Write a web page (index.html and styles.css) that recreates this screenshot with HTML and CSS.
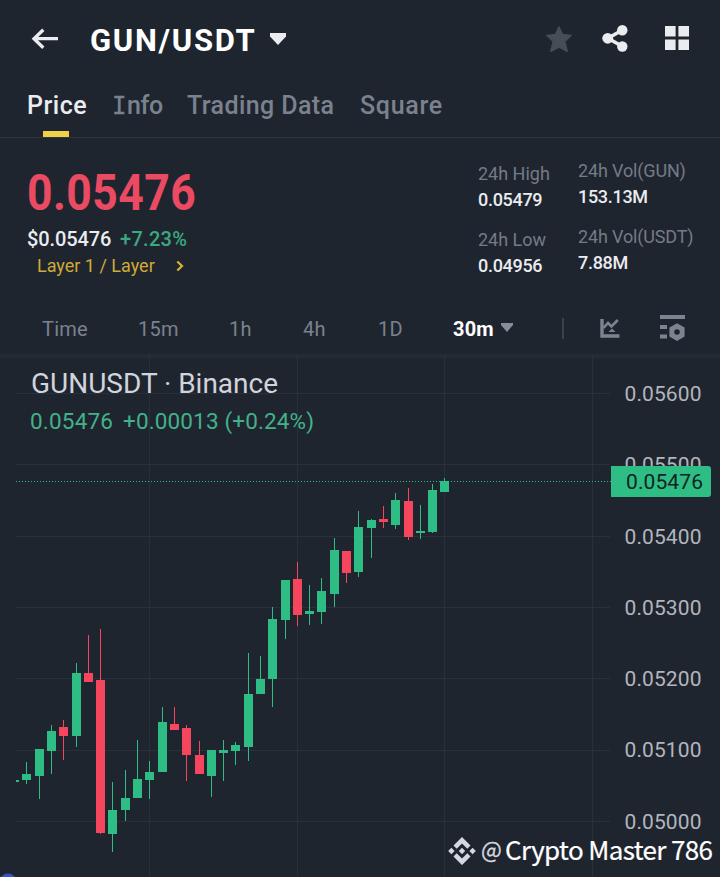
FILE: index.html
```html
<!DOCTYPE html>
<html lang="en">
<head>
<meta charset="utf-8">
<title>GUN/USDT</title>
<link rel="stylesheet" href="styles.css">
</head>
<body>
<div class="app">
  <header class="topbar">
    <svg class="back" width="28" height="22" viewBox="0 0 28 22"><path d="M27 10.700H3M12.300 1.700L3 10.700L12.300 19.700" fill="none" stroke="#eaecef" stroke-width="3.300"/></svg>
    <h1 class="pair">GUN/USDT</h1>
    <svg class="pair-caret" width="18" height="14" viewBox="0 0 18 14"><path d="M1 1H17V4.500L9 13L1 4.500Z" fill="#eaecef"/></svg>
    <svg class="star" width="28" height="28" viewBox="0 0 28 28"><path d="M14 2L17.400 9.400L26 10.400L19.700 16.500L22.200 26.300L14 22L5.800 26.300L8.300 16.500L2 10.400L10.600 9.400Z" fill="#474d57" stroke="#474d57" stroke-width="1.500" stroke-linejoin="round"/></svg>
    <svg class="share" width="28" height="28" viewBox="0 0 28 28"><path d="M21.500 6L7 14.300L21.500 22.500" fill="none" stroke="#eaecef" stroke-width="3.600"/><g fill="#eaecef"><circle cx="21.300" cy="6.200" r="5.200"/><circle cx="6.700" cy="14.300" r="5.400"/><circle cx="21.300" cy="22.500" r="5.200"/></g></svg>
    <svg class="apps" width="24" height="24" viewBox="0 0 24 24"><path d="M0 0H10.600V10.500H0ZM13.400 0H24V10.500H13.400ZM0 13.500H10.600V24H0ZM13.400 13.500H24V24H13.400Z" fill="#eaecef"/></svg>
  </header>
  <nav class="tabs">
    <span class="tab tab-price active">Price</span>
    <span class="tab tab-info"><span class="slab">I</span>nfo</span>
    <span class="tab tab-data">Trading Data</span>
    <span class="tab tab-square">Square</span>
  </nav>
  <section class="summary">
    <div class="quote">
      <div class="last">0.05476</div>
      <div class="fiat"><span class="usd">$0.05476</span><span class="change">+7.23%</span></div>
      <div class="category"><span>Layer 1 / Layer</span><svg width="8" height="12" viewBox="0 0 8 12"><path d="M1.300 1.500L6 6L1.300 10.500" fill="none" stroke="#d9b43a" stroke-width="2.200"/></svg></div>
    </div>
    <dl class="stats stats-range">
      <dt>24h High</dt><dd>0.05479</dd>
      <dt>24h Low</dt><dd>0.04956</dd>
    </dl>
    <dl class="stats stats-volume">
      <dt>24h Vol(GUN)</dt><dd>153.13M</dd>
      <dt>24h Vol(USDT)</dt><dd>7.88M</dd>
    </dl>
  </section>
  <nav class="intervals">
    <span class="iv iv-time">Time</span>
    <span class="iv iv-15m">15m</span>
    <span class="iv iv-1h">1h</span>
    <span class="iv iv-4h">4h</span>
    <span class="iv iv-1d">1D</span>
    <span class="iv iv-30m">30m</span>
    <svg class="iv-caret" width="12" height="9" viewBox="0 0 12 9"><path d="M0 0H12V2L6 9L0 2Z" fill="#848e9c"/></svg>
    <i class="divider"></i>
    <svg class="line-icon" width="20" height="21" viewBox="0 0 20 21"><path d="M2 1V18H19.500" fill="none" stroke="#7c8491" stroke-width="3.400"/><path d="M3.500 10L8 5L11.500 8.500L17.800 2" fill="none" stroke="#7c8491" stroke-width="2.600"/><path d="M12 10.500L15.500 14H8.500Z" fill="#7c8491"/></svg>
    <svg class="settings-icon" width="26" height="26" viewBox="0 0 26 26"><path d="M0 0H25V4H0ZM0 10H7V14H0ZM0 19.500H7V23.500H0Z" fill="#7c8491"/><path fill-rule="evenodd" d="M17 8.200L24.600 12.500V21.500L17 26L9.400 21.500V12.500ZM17 14.200A2.800 2.800 0 1 0 17 19.800A2.800 2.800 0 1 0 17 14.200Z" fill="#7c8491"/></svg>
  </nav>
  <main class="chart">
    <svg width="720" height="523" viewBox="0 354 720 523">
      <rect x="0" y="354" width="720" height="4" fill="#242b35"/>
      <path class="grid" d="M149.500 354V877M297.500 354V877M444.500 354V877M592.500 354V877M16 393.500H610M16 464.500H610M16 536.500H610M16 607.500H610M16 678.500H610M16 750.500H610M16 821.500H610"/>
      <path d="M16 481.500H611" stroke="#2ebd85" stroke-width="1" stroke-dasharray="1 2"/>
      <path class="wick up" d="M26.500 762V784M39.500 749V799M51.500 725V774M76.500 663V747M112.500 782V852M125.500 770V821M137.500 740V798M149.500 761V799M162.500 707V772M211.500 750V797M223.500 740V781M235.500 742V765M248.500 653V761M260.500 656V694M272.500 607V707M285.500 580V639M309.500 585V625M321.500 578V624M334.500 538V607M358.500 511V577M371.500 519V558M395.500 493V529M420.500 505V539M432.500 484V533M444.500 478V492"/>
      <path class="wick down" d="M63.500 720V760M88.500 635V682M100.500 629V834M174.500 707V730M186.500 725V781M199.500 741V774M297.500 562V626M346.500 551V583M383.500 506V528M408.500 488V540"/>
      <path fill="#2ebd85" d="M16 780h3v2h-3zM22 774h9v6h-9zM35 749h9v27h-9zM47 731h9v20h-9zM72 673h9v63h-9zM108 810h9v24h-9zM121 798h9v12h-9zM133 779h9v19h-9zM145 772h9v8h-9zM158 722h9v50h-9zM207 750h9v26h-9zM219 750h9v3h-9zM231 745h9v6h-9zM244 694h9v53h-9zM256 679h9v15h-9zM268 619h9v60h-9zM281 580h9v40h-9zM305 611h9v3h-9zM317 591h9v21h-9zM330 550h9v44h-9zM354 527h9v45h-9zM367 520h9v8h-9zM391 500h9v25h-9zM416 531h9v2h-9zM428 490h9v42h-9zM440 481h9v11h-9z"/>
      <path fill="#f6465d" d="M59 727h9v9h-9zM84 673h9v9h-9zM96 680h9v153h-9zM170 724h9v6h-9zM182 728h9v27h-9zM195 755h9v19h-9zM293 579h9v36h-9zM342 551h9v22h-9zM379 519h9v3h-9zM404 501h9v36h-9z"/>
      <text class="name" x="31" y="392.500" textLength="247">GUNUSDT · Binance</text>
      <text class="delta" x="30" y="429" textLength="83">0.05476</text>
      <text class="delta" x="123" y="429" textLength="191">+0.00013 (+0.24%)</text>
      <g class="axis">
        <text x="624.500" y="401" textLength="77">0.05600</text>
        <text x="624.500" y="472" textLength="77">0.05500</text>
        <text x="624.500" y="544" textLength="77">0.05400</text>
        <text x="624.500" y="615" textLength="77">0.05300</text>
        <text x="624.500" y="686" textLength="77">0.05200</text>
        <text x="624.500" y="757" textLength="77">0.05100</text>
        <text x="624.500" y="829" textLength="77">0.05000</text>
      </g>
      <path d="M611 466H708a3 3 0 0 1 3 3V494a3 3 0 0 1 -3 3H611Z" fill="#2ebd85"/>
      <text class="marker" x="626" y="489" textLength="77">0.05476</text>
      <circle cx="8" cy="882" r="8.500" fill="#3455c4"/>
      <g fill="#d5d8df" transform="translate(462 851)">
        <path d="M0 -14L8.500 -5.500L5.300 -2.300L0 -7.600L-5.300 -2.300L-8.500 -5.500ZM0 14L8.500 5.500L5.300 2.300L0 7.600L-5.300 2.300L-8.500 5.500ZM0 -3.200L3.200 0L0 3.200L-3.200 0ZM-10.600 -3.200L-7.400 0L-10.600 3.200L-13.800 0ZM10.600 -3.200L13.800 0L10.600 3.200L7.400 0Z"/>
      </g>
      <text class="at" x="481" y="858" textLength="20">@</text>
      <text class="author" x="505" y="860" textLength="208">Crypto Master 786</text>
    </svg>
  </main>
</div>
</body>
</html>
```
FILE: styles.css
```css
* { box-sizing: border-box; }
body { margin: 0; background: #1f252f; font-family: Roboto, "Liberation Sans", sans-serif; color: #eaecef; }
.app { width: 720px; height: 877px; overflow: hidden; display: flex; flex-direction: column; background: #1f252f; }
svg { display: block; flex: none; }

.topbar { height: 78px; display: flex; align-items: center; padding: 0 31px; }
.pair { margin: 2px 0 0 31px; width: 166px; font-size: 31px; font-weight: 700; letter-spacing: 1.7px; color: #fff; }
.pair-caret { margin-left: 13px; }
.star { margin-left: 258px; }
.share { margin: -2px 0 0 28px; }
.apps { margin: -2px 0 0 36px; }

.tabs { height: 60px; display: flex; border-bottom: 1px solid #2d343f; padding-left: 27px; white-space: nowrap; }
.tab { font-size: 25px; line-height: 56px; font-weight: 500; color: #7b828e; letter-spacing: 0.5px; position: relative; }
.tab-info { width: 74px; letter-spacing: -0.4px; }
.tab-data { width: 173px; letter-spacing: 0.4px; }
.tab-square { letter-spacing: 0.7px; }
.active { color: #eaecef; width: 60px; margin-right: 26px; }
.active::after { content: ""; position: absolute; left: 16px; bottom: 0; width: 26px; height: 6px; background: #f0d24a; }
.slab { font-family: "DejaVu Sans Mono", monospace; -webkit-text-stroke: 0.3px currentColor; font-size: 24px; margin-left: -1px; margin-right: 1px; }

.summary { height: 163px; display: flex; padding-left: 27px; white-space: nowrap; }
.quote { width: 451px; padding-top: 30px; }
.last { font-size: 50px; line-height: 50px; font-weight: 700; color: #ea4b62; letter-spacing: 0.500px; transform: scaleX(0.89); transform-origin: left; }
.fiat { display: flex; margin-top: 9px; font-size: 20px; line-height: 24px; font-weight: 500; }
.usd { width: 93px; letter-spacing: -0.1px; }
.change { color: #3aa981; font-weight: 500; letter-spacing: 0.3px; }
.category { display: flex; align-items: center; gap: 21px; margin: 4px 0 0 10px; font-size: 18px; line-height: 22px; color: #d0aa38; }
.stats { margin: 0; }
.stats-range { width: 100px; padding-top: 24px; }
.stats-volume { padding-top: 21px; }
.stats dt { font-size: 18px; line-height: 24px; color: #747b87; letter-spacing: 0; }
.stats-volume dt { letter-spacing: -0.15px; }
.stats dd { margin: 2px 0 16px; font-size: 18px; line-height: 24px; font-weight: 500; color: #eaecef; letter-spacing: -0.3px; }

.intervals { height: 53px; display: flex; align-items: center; padding: 1px 0 0 42px; white-space: nowrap; }
.iv { font-size: 20px; line-height: 24px; margin-top: 1px; color: #7b828e; letter-spacing: 0.2px; }
.iv-time { width: 96px; }
.iv-15m { width: 91px; }
.iv-1h { width: 74px; }
.iv-4h { width: 75px; }
.iv-1d { width: 75px; }
.iv-30m { width: 48px; color: #fff; font-weight: 700; }
.iv-caret { margin-top: -1px; }
.divider { width: 2px; height: 21px; margin-left: 49px; background: #3a414c; }
.line-icon { margin-left: 36px; }
.settings-icon { margin-left: 40px; }

.chart { height: 523px; }
.grid { stroke: #29303a; fill: none; }
.wick { fill: none; stroke-width: 1; }
.up { stroke: #2ebd85; }
.down { stroke: #f6465d; }
.name { font-size: 28px; fill: #d1d4dc; }
.delta { font-size: 22.500px; fill: #42b28a; }
.axis { font-size: 21px; fill: #b2b5be; }
.marker { font-size: 21px; fill: #10251f; }
.at { font-family: "Noto Sans CJK SC", sans-serif; font-size: 22px; fill: #d5d8df; stroke: #d5d8df; stroke-width: 0.3; }
.author { font-family: "Noto Sans CJK SC", sans-serif; font-size: 26px; fill: #fff; stroke: #fff; stroke-width: 0.2; }
```
